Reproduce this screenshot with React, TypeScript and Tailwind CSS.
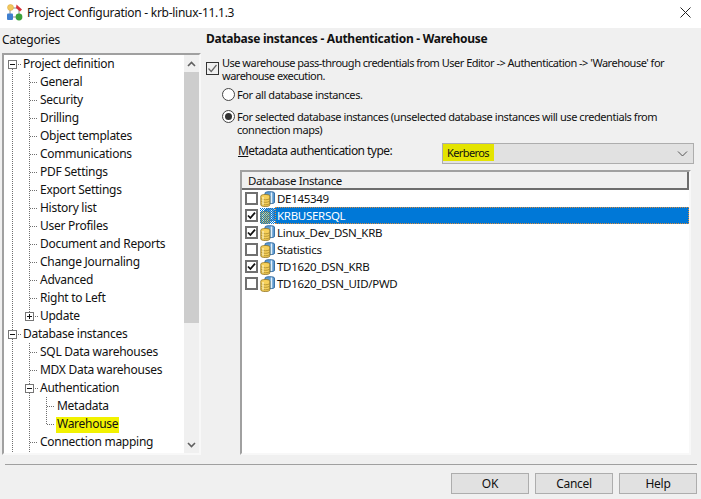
type Cell = "pipe" | "tee" | "ell" | "minus" | "minusTop" | "plus";

type TreeRow = {
  label?: string;
  cells: Cell[];
  highlight?: boolean;
};

const treeRows: TreeRow[] = [
  { label: "Project definition", cells: ["minusTop"] },
  { label: "General", cells: ["pipe", "tee"] },
  { label: "Security", cells: ["pipe", "tee"] },
  { label: "Drilling", cells: ["pipe", "tee"] },
  { label: "Object templates", cells: ["pipe", "tee"] },
  { label: "Communications", cells: ["pipe", "tee"] },
  { label: "PDF Settings", cells: ["pipe", "tee"] },
  { label: "Export Settings", cells: ["pipe", "tee"] },
  { label: "History list", cells: ["pipe", "tee"] },
  { label: "User Profiles", cells: ["pipe", "tee"] },
  { label: "Document and Reports", cells: ["pipe", "tee"] },
  { label: "Change Journaling", cells: ["pipe", "tee"] },
  { label: "Advanced", cells: ["pipe", "tee"] },
  { label: "Right to Left", cells: ["pipe", "tee"] },
  { label: "Update", cells: ["pipe", "plus"] },
  { label: "Database instances", cells: ["minus"] },
  { label: "SQL Data warehouses", cells: ["pipe", "tee"] },
  { label: "MDX Data warehouses", cells: ["pipe", "tee"] },
  { label: "Authentication", cells: ["pipe", "minus"] },
  { label: "Metadata", cells: ["pipe", "pipe", "tee"] },
  { label: "Warehouse", cells: ["pipe", "pipe", "ell"], highlight: true },
  { label: "Connection mapping", cells: ["pipe", "tee"] },
  { cells: ["pipe", "pipe"] },
];

const instances = [
  { name: "DE145349", checked: false },
  { name: "KRBUSERSQL", checked: true, selected: true },
  { name: "Linux_Dev_DSN_KRB", checked: true },
  { name: "Statistics", checked: false },
  { name: "TD1620_DSN_KRB", checked: true },
  { name: "TD1620_DSN_UID/PWD", checked: false },
];

function TreeCell({ kind }: { kind: Cell }) {
  const dots = { stroke: "#6f6f6f", strokeDasharray: "1 1" };
  const hasBox = kind === "minus" || kind === "minusTop" || kind === "plus";
  return (
    <svg width="17" height="18" className="shrink-0" shapeRendering="crispEdges">
      {kind === "pipe" && <line x1="8.5" y1="0" x2="8.5" y2="18" {...dots} />}
      {kind === "tee" && <line x1="8.5" y1="0" x2="8.5" y2="18" {...dots} />}
      {kind === "ell" && <line x1="8.5" y1="0" x2="8.5" y2="9" {...dots} />}
      {(kind === "tee" || kind === "ell") && <line x1="9" y1="9.5" x2="17" y2="9.5" {...dots} />}
      {hasBox && (
        <>
          {kind !== "minusTop" && <line x1="8.5" y1="0" x2="8.5" y2="5" {...dots} />}
          {kind !== "plus" && <line x1="8.5" y1="14" x2="8.5" y2="18" {...dots} />}
          <line x1="14" y1="9.5" x2="17" y2="9.5" {...dots} />
          <rect x="4.5" y="5.5" width="8" height="8" fill="#fff" stroke="#767676" />
          <line x1="6" y1="9.5" x2="11" y2="9.5" stroke="#111" />
          {kind === "plus" && <line x1="8.5" y1="7" x2="8.5" y2="12" stroke="#111" />}
        </>
      )}
    </svg>
  );
}

function AppIcon() {
  return (
    <svg width="17" height="17" viewBox="0 0 17 17" className="shrink-0">
      <path d="M4 4H13V13H4Z" fill="none" stroke="#8a8a8a" strokeWidth="1" />
      <circle cx="4.5" cy="3.5" r="3" fill="#f2c75c" stroke="#d6a640" strokeWidth="0.5" />
      <path d="M10.5 0.5L16 5.5L14 7.5L10 4Z" fill="#d8343a" />
      <rect x="1" y="9.5" width="6" height="6.5" rx="1" fill="#3f7fd0" />
      <circle cx="13" cy="13" r="3.4" fill="#3aa23c" />
    </svg>
  );
}

function DbIcon({ selected }: { selected?: boolean }) {
  return (
    <svg width="15" height="16" viewBox="0 0 15 16" className="shrink-0">
      <defs>
        <pattern id="dither" width="2" height="2" patternUnits="userSpaceOnUse">
          <rect width="1" height="1" fill="#0078d7" />
          <rect x="1" y="1" width="1" height="1" fill="#0078d7" />
        </pattern>
      </defs>
      <path d="M5 2C5 0.2 14.5 0.2 14.5 2V11.5C14.5 13 5 13 5 11.5Z" fill="#5f9bd0" stroke="#1f5a94" strokeWidth="0.8" />
      <path d="M11.5 1.5V12" stroke="#e3f0fa" strokeWidth="1.5" />
      <path d="M0.8 5C0.8 3 9.8 3 9.8 5V14C9.8 16 0.8 16 0.8 14Z" fill="#f6d05a" stroke="#8d7020" strokeWidth="0.8" />
      <path d="M1 7.7C3 9.2 8 9.2 9.6 7.7M1 10.2C3 11.7 8 11.7 9.6 10.2M1 12.7C3 14.2 8 14.2 9.6 12.7" fill="none" stroke="#a5862a" strokeWidth="0.8" />
      <path d="M3 6V14" stroke="#fdf3c4" strokeWidth="1.2" />
      {selected && <rect width="15" height="16" fill="url(#dither)" />}
    </svg>
  );
}

function ListCheck({ checked }: { checked: boolean }) {
  return (
    <span className="flex h-[13px] w-[13px] shrink-0 items-center justify-center border-2 border-[#707070] bg-white">
      {checked && (
        <svg width="9" height="9" viewBox="0 0 9 9">
          <path d="M1 4.5L3.4 7L8 1.6" fill="none" stroke="#111" strokeWidth="1.8" />
        </svg>
      )}
    </span>
  );
}

function Radio({ checked }: { checked?: boolean }) {
  return (
    <span className="flex h-[13px] w-[13px] shrink-0 items-center justify-center rounded-full border border-[#444] bg-white">
      {checked && <span className="h-[7px] w-[7px] rounded-full bg-[#333]" />}
    </span>
  );
}

function Chevron({ up }: { up?: boolean }) {
  return (
    <svg width="9" height="6" viewBox="0 0 9 6">
      <path d={up ? "M1 5L4.5 1.5L8 5" : "M1 1L4.5 4.5L8 1"} fill="none" stroke="#606060" strokeWidth="1.6" />
    </svg>
  );
}

export default function App() {
  return (
    <div
      className="flex h-[499px] w-[701px] flex-col overflow-hidden bg-[#f0f0f0] text-[12px] leading-[13px] tracking-[-0.27px] text-[#111]"
      style={{ fontFamily: '"Noto Sans", Arial, sans-serif' }}
    >
      <div className="flex h-[28px] shrink-0 items-center bg-white pb-[3px] pl-[6px] pr-[10px]">
        <AppIcon />
        <span className="ml-[4px] flex-1">Project Configuration - krb-linux-11.1.3</span>
        <svg width="11" height="11" viewBox="0 0 11 11">
          <path d="M0.5 0.5L10.5 10.5M10.5 0.5L0.5 10.5" stroke="#222" strokeWidth="1" />
        </svg>
      </div>

      <div className="flex h-[436px] shrink-0">
        <div className="ml-[2px] w-[199px] shrink-0">
          <div className="mt-[5px] h-[20px]">Categories</div>
          <div className="flex h-[402px] border-2 border-t-[#a0a0a0] border-r-[#f8f8f8] border-b-[#f8f8f8] border-l-[#a0a0a0] bg-white">
            <div className="w-[180px] overflow-hidden">
              {treeRows.map((row, i) => (
                <div key={i} className="flex h-[18px] items-center">
                  {row.cells.map((cell, j) => (
                    <TreeCell key={j} kind={cell} />
                  ))}
                  {row.label && (
                    <span
                      className={`ml-[1px] flex h-[16px] items-center px-[1px] whitespace-nowrap ${
                        row.highlight ? "mt-[2px] bg-[#f2f200] pb-[3px]" : "pb-[2px]"
                      }`}
                    >
                      {row.label}
                    </span>
                  )}
                </div>
              ))}
            </div>
            <div className="flex w-[15px] flex-col bg-[#f0f0f0]">
              <div className="flex h-[17px] items-center justify-center">
                <Chevron up />
              </div>
              <div className="h-[251px] bg-[#cdcdcd]" />
              <div className="flex-1" />
              <div className="flex h-[17px] items-center justify-center">
                <Chevron />
              </div>
            </div>
          </div>
        </div>

        <div className="ml-[5px] flex-1">
          <div className="mt-[4px] h-[14px] font-bold leading-[14px]">Database instances - Authentication - Warehouse</div>
          <div className="mt-[10px] flex">
            <span className="mt-[6px] flex h-[13px] w-[13px] shrink-0 items-center justify-center border border-[#333]">
              <svg width="11" height="11" viewBox="0 0 11 11">
                <path d="M1.5 5.5L4.2 8.5L9.5 2" fill="none" stroke="#666" strokeWidth="1.2" />
              </svg>
            </span>
            <p className="ml-[3px] w-[455px] text-[11px] tracking-[-0.5px]">
              Use warehouse pass-through credentials from User Editor -&gt; Authentication -&gt; 'Warehouse' for warehouse execution.
            </p>
          </div>
          <div className="ml-[16px] mt-[6px] flex h-[13px] items-center gap-[2px] text-[11px] tracking-[-0.4px]">
            <Radio />
            <span>For all database instances.</span>
          </div>
          <div className="ml-[16px] mt-[9px] flex text-[11px] tracking-[-0.42px]">
            <Radio checked />
            <p className="ml-[2px] w-[430px]">
              For selected database instances (unselected database instances will use credentials from connection maps)
            </p>
          </div>
          <div className="ml-[32px] mt-[7px] flex h-[21px]">
            <span className="w-[204px] pt-[1px] tracking-[-0.55px]">
              <span className="underline">M</span>etadata authentication type:
            </span>
            <div className="flex w-[252px] items-center justify-between border border-[#adadad] bg-[#e1e1e1] pr-[5px]">
              <span className="mb-[2px] flex h-[17px] w-[51px] items-center bg-[#e4e400] pb-[1px] pl-[4px] text-[11px] tracking-[-0.6px]">Kerberos</span>
              <svg width="11" height="6" viewBox="0 0 11 6">
                <path d="M1 0.5L5.5 5L10 0.5" fill="none" stroke="#555" strokeWidth="1" />
              </svg>
            </div>
          </div>
          <div className="ml-[34px] mt-[6px] h-[285px] w-[451px] border-2 border-t-[#a0a0a0] border-r-[#f8f8f8] border-b-[#f8f8f8] border-l-[#a0a0a0] bg-white">
            <div className="flex h-[18px] items-center border-r-2 border-b-2 border-r-[#6d6d6d] border-b-[#6d6d6d] bg-[#f0f0f0] pl-[6px] text-[11.5px] tracking-[-0.37px]">
              Database Instance
            </div>
            <div>
              {instances.map((item) => (
                <div key={item.name} className="flex h-[17px] items-center pl-[3px]">
                  <ListCheck checked={item.checked} />
                  <span className="ml-[2px]">
                    <DbIcon selected={item.selected} />
                  </span>
                  <span
                    className={`flex h-[17px] flex-1 items-center pl-[2px] text-[11.5px] tracking-[-0.3px] ${
                      item.selected ? "bg-[#0078d7] text-white outline outline-dotted outline-[#d98a3d] -outline-offset-1" : ""
                    }`}
                  >
                    {item.name}
                  </span>
                </div>
              ))}
            </div>
          </div>
        </div>
      </div>

      <div className="ml-[5px] mr-[4px] border-t border-[#a0a0a0]" />
      <div className="mr-[4px] mt-[8px] flex justify-end gap-[6px]">
        {["OK", "Cancel", "Help"].map((label) => (
          <button key={label} className="h-[21px] w-[78px] border border-[#adadad] bg-[#e1e1e1] text-center">
            {label}
          </button>
        ))}
      </div>
    </div>
  );
}
